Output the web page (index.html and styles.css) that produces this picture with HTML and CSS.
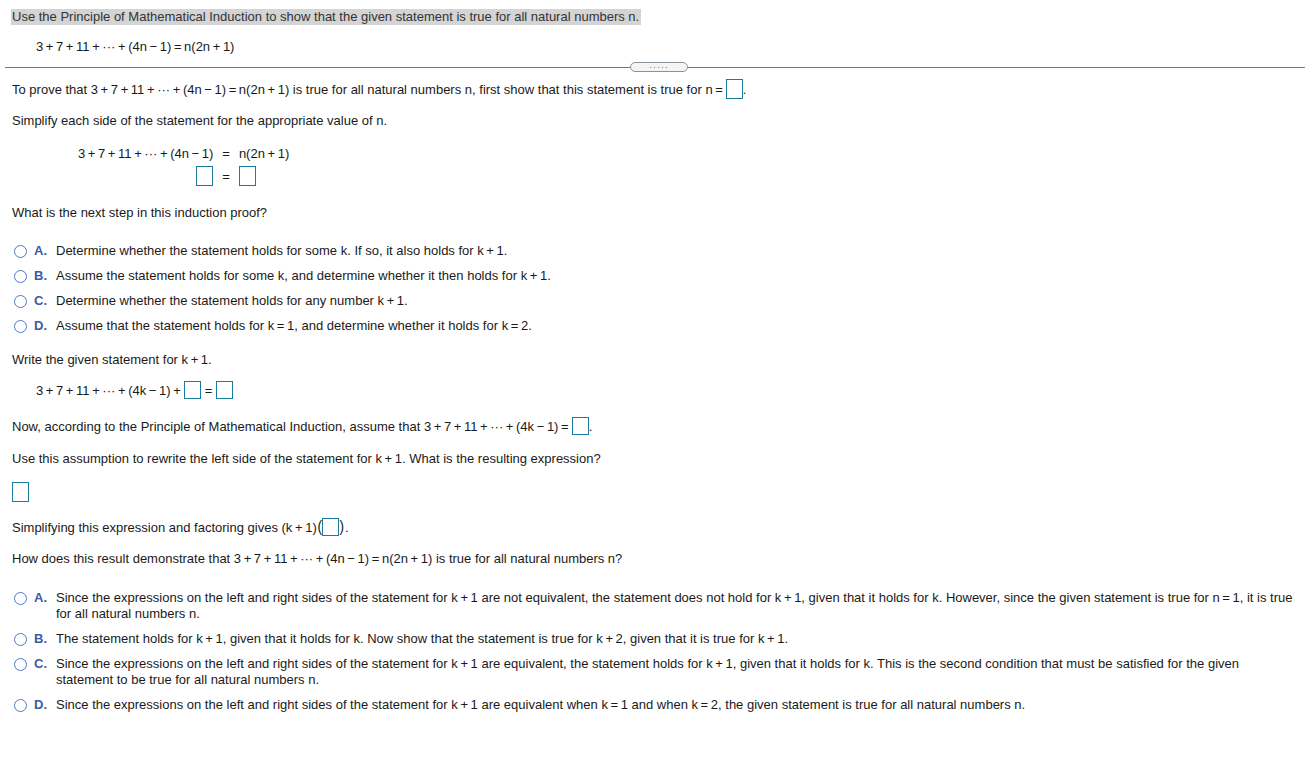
FILE: index.html
```html
<!DOCTYPE html>
<html>
<head>
<meta charset="utf-8">
<link rel="stylesheet" href="styles.css">
</head>
<body>
<div class="page">
  <div class="row r-header"><span class="header">Use the Principle of Mathematical Induction to show that the given statement is true for all natural numbers n.</span></div>
  <div class="row r-eq1 indent"><span class="m">3&thinsp;+&thinsp;7&thinsp;+&thinsp;11&thinsp;+&thinsp;···&thinsp;+&thinsp;(4n&thinsp;−&thinsp;1)&thinsp;=&thinsp;n(2n&thinsp;+&thinsp;1)</span></div>
  <div class="divider"><span class="seg-left"></span><span class="pill">·····</span><span class="seg-right"></span></div>
  <div class="row r-p1">To prove that&nbsp;<span class="m">3&thinsp;+&thinsp;7&thinsp;+&thinsp;11&thinsp;+&thinsp;···&thinsp;+&thinsp;(4n&thinsp;−&thinsp;1)&thinsp;=&thinsp;n(2n&thinsp;+&thinsp;1)</span>&nbsp;is true for all natural numbers n, first show that this statement is true for&nbsp;<span class="m">n&thinsp;=</span><span class="box gap"></span>.</div>
  <div class="row r-p2">Simplify each side of the statement for the appropriate value of n.</div>
  <div class="eqgrid">
    <div class="lhs m">3&thinsp;+&thinsp;7&thinsp;+&thinsp;11&thinsp;+&thinsp;···&thinsp;+&thinsp;(4n&thinsp;−&thinsp;1)</div><div class="eqs">=</div><div class="rhs m">n(2n&thinsp;+&thinsp;1)</div>
    <div class="lhs cell"><span class="box"></span></div><div class="eqs cell">=</div><div class="rhs cell"><span class="box"></span></div>
  </div>
  <div class="row r-p3">What is the next step in this induction proof?</div>
  <div class="options o1">
    <div class="opt"><span class="radio"></span><span class="letter">A.</span><span class="otext">Determine whether the statement holds for some k. If so, it also holds for k&thinsp;+&thinsp;1.</span></div>
    <div class="opt"><span class="radio"></span><span class="letter">B.</span><span class="otext">Assume the statement holds for some k, and determine whether it then holds for k&thinsp;+&thinsp;1.</span></div>
    <div class="opt"><span class="radio"></span><span class="letter">C.</span><span class="otext">Determine whether the statement holds for any number k&thinsp;+&thinsp;1.</span></div>
    <div class="opt"><span class="radio"></span><span class="letter">D.</span><span class="otext">Assume that the statement holds for k&thinsp;=&thinsp;1, and determine whether it holds for k&thinsp;=&thinsp;2.</span></div>
  </div>
  <div class="row r-p4">Write the given statement for&nbsp;<span class="m">k&thinsp;+&thinsp;1</span>.</div>
  <div class="row r-eq2 indent"><span class="m">3&thinsp;+&thinsp;7&thinsp;+&thinsp;11&thinsp;+&thinsp;···&thinsp;+&thinsp;(4k&thinsp;−&thinsp;1)&thinsp;+</span><span class="box sm gap"></span><span class="eqx">=</span><span class="box sm"></span></div>
  <div class="row r-p5">Now, according to the Principle of Mathematical Induction, assume that&nbsp;<span class="m">3&thinsp;+&thinsp;7&thinsp;+&thinsp;11&thinsp;+&thinsp;···&thinsp;+&thinsp;(4k&thinsp;−&thinsp;1)&thinsp;=</span><span class="box sm gap"></span>.</div>
  <div class="row r-p6">Use this assumption to rewrite the left side of the statement for&nbsp;<span class="m">k&thinsp;+&thinsp;1</span>. What is the resulting expression?</div>
  <div class="row r-box"><span class="box"></span></div>
  <div class="row r-p7">Simplifying this expression and factoring gives&nbsp;<span class="m">(k&thinsp;+&thinsp;1)</span><span class="paren">(</span><span class="box sm"></span><span class="paren">)</span>.</div>
  <div class="row r-p8">How does this result demonstrate that&nbsp;<span class="m">3&thinsp;+&thinsp;7&thinsp;+&thinsp;11&thinsp;+&thinsp;···&thinsp;+&thinsp;(4n&thinsp;−&thinsp;1)&thinsp;=&thinsp;n(2n&thinsp;+&thinsp;1)</span>&nbsp;is true for all natural numbers n?</div>
  <div class="options o2">
    <div class="opt"><span class="radio"></span><span class="letter">A.</span><span class="otext">Since the expressions on the left and right sides of the statement for k&thinsp;+&thinsp;1 are not equivalent, the statement does not hold for k&thinsp;+&thinsp;1, given that it holds for k. However, since the given statement is true for n&thinsp;=&thinsp;1, it is true for all natural numbers n.</span></div>
    <div class="opt"><span class="radio"></span><span class="letter">B.</span><span class="otext">The statement holds for k&thinsp;+&thinsp;1, given that it holds for k. Now show that the statement is true for k&thinsp;+&thinsp;2, given that it is true for k&thinsp;+&thinsp;1.</span></div>
    <div class="opt"><span class="radio"></span><span class="letter">C.</span><span class="otext">Since the expressions on the left and right sides of the statement for k&thinsp;+&thinsp;1 are equivalent, the statement holds for k&thinsp;+&thinsp;1, given that it holds for k. This is the second condition that must be satisfied for the given statement to be true for all natural numbers n.</span></div>
    <div class="opt"><span class="radio"></span><span class="letter">D.</span><span class="otext">Since the expressions on the left and right sides of the statement for k&thinsp;+&thinsp;1 are equivalent when k&thinsp;=&thinsp;1 and when k&thinsp;=&thinsp;2, the given statement is true for all natural numbers n.</span></div>
  </div>
</div>
</body>
</html>
```

FILE: styles.css
```css
html, body {
  margin: 0;
  padding: 0;
  background: #ffffff;
}
body {
  font-family: "Liberation Sans", Arial, sans-serif;
  font-size: 13px;
  color: #1a1a1a;
}
.page {
  padding: 9px 0 40px 12px;
}
.row {
  display: flex;
  align-items: center;
  height: 16px;
  white-space: nowrap;
}
.m {
  white-space: nowrap;
}
.indent { padding-left: 24px; }
.header {
  background: #d4d4d4;
  color: #333;
  padding: 0 2px 0 1px;
  margin-left: -1px;
  line-height: 16px;
}
.r-eq1 { margin-top: 13px; }
.divider {
  display: flex;
  align-items: center;
  height: 12px;
  margin-top: 7px;
  margin-left: -7px;
}
.seg-left {
  width: 625px;
  height: 1px;
  background: #6f7a85;
}
.seg-right {
  flex: 1;
  height: 1px;
  background: #6f7a85;
}
.pill {
  display: flex;
  align-items: center;
  justify-content: center;
  width: 56px;
  height: 8px;
  border: 1px solid #8a929a;
  border-radius: 5px;
  background: #f3f4f6;
  color: #666;
  font-size: 9px;
  line-height: 8px;
  letter-spacing: 1px;
}
.r-p1 { margin-top: 5px; height: 22px; }
.box {
  display: inline-block;
  width: 15px;
  height: 18px;
  border: 1px solid #1a7b9e;
  box-sizing: content-box;
}
.box.sm { height: 16px; }
.box.gap { margin-left: 3px; }
.eqx { margin: 0 4px; }
.r-p2 { margin-top: 12px; }
.eqgrid {
  display: grid;
  grid-template-columns: auto auto auto;
  column-gap: 9px;
  margin-left: 66px;
  margin-top: 17px;
  justify-content: start;
  grid-template-rows: 16px 22px;
  row-gap: 4px;
}
.lhs { display: flex; align-items: center; justify-content: flex-end; }
.eqs { display: flex; align-items: center; justify-content: center; }
.rhs { display: flex; align-items: center; }
.r-p3 { margin-top: 17px; }
.options { display: flex; flex-direction: column; gap: 9px; }
.o1 { margin-top: 23px; }
.o2 { margin-top: 24px; }
.opt {
  display: flex;
  align-items: flex-start;
  line-height: 16px;
}
.radio {
  width: 11px;
  height: 11px;
  border: 1px solid #4a78c8;
  border-radius: 50%;
  margin: 2px 0 0 2px;
  flex: none;
}
.letter {
  width: 22px;
  margin-left: 7px;
  color: #3d5aa8;
  font-weight: bold;
  flex: none;
}
.otext {
  width: 1238px;
}
.r-p4 { margin-top: 17px; }
.r-eq2 { margin-top: 13px; height: 20px; }
.r-p5 { margin-top: 16px; height: 20px; }
.r-p6 { margin-top: 14px; }
.r-box { margin-top: 15px; height: 22px; }
.r-p7 { margin-top: 15px; height: 18px; }
.paren {
  font-size: 17px;
  line-height: 18px;
  transform: scaleX(0.8);
  display: inline-block;
}
.r-p8 { margin-top: 14px; }
```
